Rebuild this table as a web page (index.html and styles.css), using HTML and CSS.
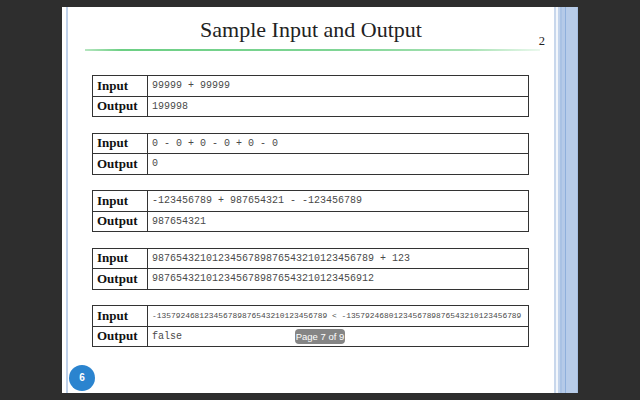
FILE: index.html
```html
<!DOCTYPE html>
<html>
<head>
<meta charset="utf-8">
<link rel="stylesheet" href="styles.css">
</head>
<body>
<div class="viewer">
  <div class="page">
    <div class="edge-left"></div>
    <div class="content">
      <div class="header">
        <div></div>
        <h1 class="title">Sample Input and Output</h1>
        <div class="pagenum">2</div>
      </div>
      <div class="rule"></div>
      <div class="tables">
        <div class="io">
          <div class="label">Input</div><div class="val">99999 + 99999</div>
          <div class="label row2">Output</div><div class="val row2">199998</div>
        </div>
        <div class="io">
          <div class="label">Input</div><div class="val">0 - 0 + 0 - 0 + 0 - 0</div>
          <div class="label row2">Output</div><div class="val row2">0</div>
        </div>
        <div class="io">
          <div class="label">Input</div><div class="val">-123456789 + 987654321 - -123456789</div>
          <div class="label row2">Output</div><div class="val row2">987654321</div>
        </div>
        <div class="io">
          <div class="label">Input</div><div class="val">9876543210123456789876543210123456789 + 123</div>
          <div class="label row2">Output</div><div class="val row2">9876543210123456789876543210123456912</div>
        </div>
        <div class="io">
          <div class="label">Input</div><div class="val small">-135792468123456789876543210123456789 &lt; -1357924680123456789876543210123456789</div>
          <div class="label row2">Output</div><div class="val row2">false</div>
        </div>
      </div>
    </div>
    <div class="edge-right"></div>
    <div class="badge">Page 7 of 9</div>
    <div class="circle">6</div>
  </div>
</div>
</body>
</html>
```
FILE: styles.css
```css
html, body {
  margin: 0;
  padding: 0;
  background: #2e2e2e;
  width: 640px;
  height: 400px;
  overflow: hidden;
}
.viewer {
  display: flex;
  justify-content: center;
  padding-top: 7px;
}
.page {
  position: relative;
  width: 516px;
  height: 386px;
  background: #fff;
  display: flex;
}
.edge-left {
  width: 6px;
  flex: none;
  background: linear-gradient(to right, #fff 0 4px, #bfd1ea 4px 6px);
}
.edge-right {
  width: 24px;
  flex: none;
  background: linear-gradient(to right,
    #c8d7ec 0 2px, #f2f6fb 2px 4px, #c3d4ec 4px 6px, #a9c2e4 6px 8px,
    #b5cae8 8px 11px, #8fb0dc 11px 12px, #b7cce9 12px 23px, #a6bfe2 23px 24px);
}
.content {
  flex: 1;
  display: flex;
  flex-direction: column;
}
.header {
  margin-top: 10px;
  display: grid;
  grid-template-columns: 1fr auto 1fr;
  align-items: end;
}
.title {
  margin: 0;
  font-family: "Liberation Serif", serif;
  font-weight: normal;
  font-size: 22px;
  line-height: 26px;
  color: #222;
  text-align: center;
}
.pagenum {
  justify-self: end;
  margin-right: 9px;
  margin-bottom: -4px;
  font-family: "Liberation Serif", serif;
  font-size: 12.5px;
  line-height: 12px;
  color: #222;
}
.rule {
  margin: 6px 0 0 17px;
  width: 455px;
  height: 2px;
  background: linear-gradient(to right, rgba(110,205,130,0.5), #6ccf84 8%, #7fd595 55%, #a9e2b5 85%, rgba(190,235,200,0.3));
}
.tables {
  margin: 24px 0 0 24px;
  width: 437px;
  display: flex;
  flex-direction: column;
  gap: 15.5px;
}
.io {
  display: grid;
  grid-template-columns: 55px 1fr;
  border: 1px solid #333;
}
.label, .val {
  height: 19.5px;
  display: flex;
  align-items: center;
  white-space: nowrap;
}
.label {
  border-right: 1px solid #333;
  padding-left: 4px;
  font-family: "Liberation Serif", serif;
  font-weight: bold;
  font-size: 13px;
  color: #111;
}
.val {
  padding-left: 4px;
  font-family: "Liberation Mono", monospace;
  font-size: 10px;
  color: #4a4a4a;
}
.val.small {
  font-size: 7.9px;
}
.row2 {
  border-top: 1px solid #333;
}
.badge {
  position: absolute;
  left: 233px;
  top: 322px;
  width: 50px;
  height: 15px;
  border-radius: 4px;
  background: #858585;
  color: #fff;
  font-family: "Liberation Sans", sans-serif;
  font-size: 9.5px;
  line-height: 15px;
  text-align: center;
}
.circle {
  position: absolute;
  left: 7px;
  top: 358px;
  width: 26px;
  height: 26px;
  border-radius: 50%;
  background: #2b84cf;
  color: #fff;
  font-family: "Liberation Sans", sans-serif;
  font-weight: bold;
  font-size: 10px;
  line-height: 26px;
  text-align: center;
}
```
